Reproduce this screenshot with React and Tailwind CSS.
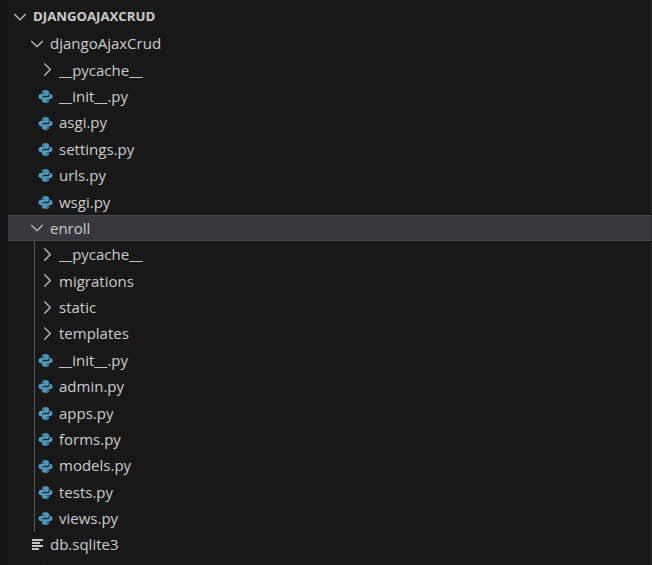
import { ChevronDown, ChevronRight } from "lucide-react";

const font = { fontFamily: '"Open Sans", "Noto Sans", sans-serif' };

function PythonIcon() {
  return (
    <svg width="15" height="15" viewBox="0 0 16 18" preserveAspectRatio="none" className="mt-[1px] shrink-0" fill="#519aba" stroke="#519aba" strokeWidth="0.4">
      <path d="M7.6 1.5C5.2 1.5 4.6 2.5 4.6 3.6V5.3H8.2V6H3C1.6 6 .7 7.2.7 9s.9 3.1 2.3 3.1H4.4V10.2C4.4 8.9 5.4 8 6.6 8H9.8C10.9 8 11.6 7.2 11.6 6.2V3.6C11.6 2.4 10.2 1.5 7.6 1.5ZM6 2.6A.7.7 0 1 1 6 4 .7.7 0 0 1 6 2.6Z" />
      <path d="M8.4 16.5C10.8 16.5 11.4 15.5 11.4 14.4V12.7H7.8V12H13C14.4 12 15.3 10.8 15.3 9S14.4 5.9 13 5.9H12.4V7.8C12.4 9.1 11.4 10 10.2 10H6.2C5.1 10 4.4 10.8 4.4 11.8V14.4C4.4 15.6 5.8 16.5 8.4 16.5ZM10 15.4A.7.7 0 1 1 10 14 .7.7 0 0 1 10 15.4Z" />
    </svg>
  );
}

function LinesIcon() {
  return (
    <svg width="14" height="14" viewBox="0 0 14 14" className="shrink-0">
      <rect x="1" y="1" width="11" height="2" fill="#c5c5c5" />
      <rect x="1" y="4" width="8" height="2" fill="#c5c5c5" />
      <rect x="1" y="7" width="11" height="2" fill="#c5c5c5" />
      <rect x="1" y="10" width="7" height="2" fill="#c5c5c5" />
    </svg>
  );
}

function Folder({ name }) {
  return (
    <div className="flex h-[26.39px] items-center gap-[0.5px] pl-[27.5px]">
      <ChevronRight size={23} strokeWidth={1.2} className="shrink-0 text-[#c5c5c5]" />
      <span>{name}</span>
    </div>
  );
}

function File({ name }) {
  return (
    <div className="flex h-[26.39px] items-center gap-[6.5px] pl-[29.5px]">
      <PythonIcon />
      <span>{name}</span>
    </div>
  );
}

const topFiles = ["__init__.py", "asgi.py", "settings.py", "urls.py", "wsgi.py"];
const enrollFolders = ["__pycache__", "migrations", "static", "templates"];
const enrollFiles = ["__init__.py", "admin.py", "apps.py", "forms.py", "models.py", "tests.py", "views.py"];

export default function App() {
  return (
    <div className="flex h-[565px] w-[652px] overflow-hidden bg-[#181818] text-[15px] text-[#cccccc]" style={font}>
      <div className="w-[8px] shrink-0 bg-[#141414]" />
      <div className="min-w-0 flex-1 pt-[4px]">
        {/* Project root */}
        <div className="flex h-[26.39px] items-center gap-[2px] pl-[1px]">
          <ChevronDown size={22} strokeWidth={1.2} className="shrink-0 text-[#c5c5c5]" />
          <span className="text-[13.2px] font-bold">DJANGOAJAXCRUD</span>
        </div>

        <div className="flex h-[26.39px] items-center gap-[2.5px] pl-[17.5px]">
          <ChevronDown size={22} strokeWidth={1.2} className="shrink-0 text-[#c5c5c5]" />
          <span>djangoAjaxCrud</span>
        </div>
        <Folder name="__pycache__" />
        {topFiles.map((f) => (
          <File key={f} name={f} />
        ))}

        {/* Selected folder */}
        <div className="flex h-[26.39px] items-center gap-[2.5px] border-y border-[#45454d] bg-[#37373d] pl-[17.5px]">
          <ChevronDown size={22} strokeWidth={1.2} className="shrink-0 text-[#c5c5c5]" />
          <span>enroll</span>
        </div>

        <div className="ml-[26px] border-l border-[#585858]">
          <div className="-ml-[27px]">
            {enrollFolders.map((f) => (
              <Folder key={f} name={f} />
            ))}
            {enrollFiles.map((f) => (
              <File key={f} name={f} />
            ))}
          </div>
        </div>

        <div className="flex h-[26.39px] items-center gap-[5px] pl-[23px]">
          <LinesIcon />
          <span>db.sqlite3</span>
        </div>
        <File name="" />
      </div>
      <div className="w-[1px] shrink-0 bg-[#2b2b2b]" />
    </div>
  );
}
